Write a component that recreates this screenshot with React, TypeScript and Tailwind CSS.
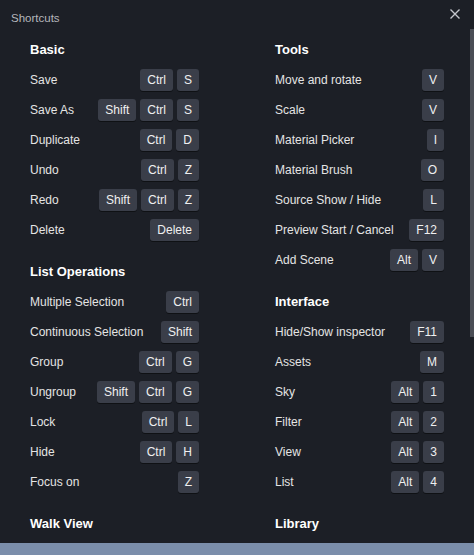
import React from 'react';

type Shortcut = { label: string; keys: string[] };
type Section = { title: string; items: Shortcut[] };

const leftColumn: Section[] = [
  {
    title: 'Basic',
    items: [
      { label: 'Save', keys: ['Ctrl', 'S'] },
      { label: 'Save As', keys: ['Shift', 'Ctrl', 'S'] },
      { label: 'Duplicate', keys: ['Ctrl', 'D'] },
      { label: 'Undo', keys: ['Ctrl', 'Z'] },
      { label: 'Redo', keys: ['Shift', 'Ctrl', 'Z'] },
      { label: 'Delete', keys: ['Delete'] },
    ],
  },
  {
    title: 'List Operations',
    items: [
      { label: 'Multiple Selection', keys: ['Ctrl'] },
      { label: 'Continuous Selection', keys: ['Shift'] },
      { label: 'Group', keys: ['Ctrl', 'G'] },
      { label: 'Ungroup', keys: ['Shift', 'Ctrl', 'G'] },
      { label: 'Lock', keys: ['Ctrl', 'L'] },
      { label: 'Hide', keys: ['Ctrl', 'H'] },
      { label: 'Focus on', keys: ['Z'] },
    ],
  },
  { title: 'Walk View', items: [] },
];

const rightColumn: Section[] = [
  {
    title: 'Tools',
    items: [
      { label: 'Move and rotate', keys: ['V'] },
      { label: 'Scale', keys: ['V'] },
      { label: 'Material Picker', keys: ['I'] },
      { label: 'Material Brush', keys: ['O'] },
      { label: 'Source Show / Hide', keys: ['L'] },
      { label: 'Preview Start / Cancel', keys: ['F12'] },
      { label: 'Add Scene', keys: ['Alt', 'V'] },
    ],
  },
  {
    title: 'Interface',
    items: [
      { label: 'Hide/Show inspector', keys: ['F11'] },
      { label: 'Assets', keys: ['M'] },
      { label: 'Sky', keys: ['Alt', '1'] },
      { label: 'Filter', keys: ['Alt', '2'] },
      { label: 'View', keys: ['Alt', '3'] },
      { label: 'List', keys: ['Alt', '4'] },
    ],
  },
  { title: 'Library', items: [] },
];

function Key({ k }: { k: string }) {
  return (
    <span className="h-[22px] px-[7px] flex items-center rounded-[3px] bg-[#3a3e49] text-[#f0f0f0] text-[12px] leading-none shadow-[0_1px_0_rgba(0,0,0,0.45)]">
      {k}
    </span>
  );
}

function ShortcutSection({ section }: { section: Section }) {
  return (
    <div className="flex flex-col">
      <div className="h-[30px] flex items-center text-[13px] font-bold text-white">{section.title}</div>
      {section.items.map((item) => (
        <div key={item.label} className="h-[30px] flex items-center justify-between">
          <span className="text-[12px] text-[#e4e4e4]">{item.label}</span>
          <div className="flex gap-1">
            {item.keys.map((k, i) => (
              <Key key={i} k={k} />
            ))}
          </div>
        </div>
      ))}
    </div>
  );
}

export default function App() {
  return (
    <div className="w-[474px] h-[555px] flex flex-col bg-[#7b8eab]" style={{ fontFamily: '"Liberation Sans", Arial, sans-serif' }}>
      <div className="relative h-[543px] overflow-hidden bg-[#1c1f26]">
        {/* Header */}
        <div className="h-[30px] flex justify-between pl-[11px] pr-[14px]">
          <span className="mt-[11px] leading-[14px] text-[11.5px] text-[#b4b6bb]">Shortcuts</span>
          <button className="mt-[9px] w-[10px] h-[10px] text-[#c4c6cc]">
            <svg viewBox="0 0 10 10" width="10" height="10" fill="none" stroke="currentColor" strokeWidth="1.4">
              <path d="M0.5 0.5L9.5 9.5M9.5 0.5L0.5 9.5" />
            </svg>
          </button>
        </div>

        {/* Content */}
        <div className="flex gap-[76px] pl-[30px] pt-[5px]">
          <div className="w-[169px] flex flex-col gap-[12px]">
            {leftColumn.map((s) => (
              <ShortcutSection key={s.title} section={s} />
            ))}
          </div>
          <div className="w-[169px] flex flex-col gap-[12px]">
            {rightColumn.map((s) => (
              <ShortcutSection key={s.title} section={s} />
            ))}
          </div>
        </div>

        {/* Scrollbar thumb */}
        <div className="absolute right-0 top-[29px] w-[4px] h-[308px] bg-[#4a4d55]" />
      </div>
    </div>
  );
}
